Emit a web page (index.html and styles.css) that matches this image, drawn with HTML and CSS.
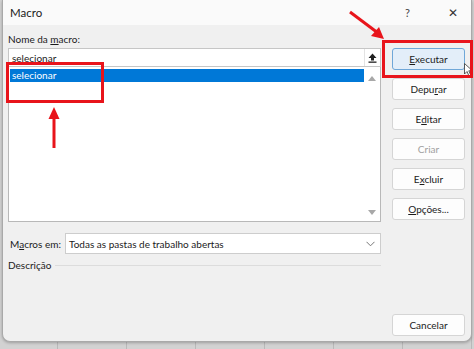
FILE: index.html
```html
<!DOCTYPE html>
<html lang="pt">
<head>
  <meta charset="UTF-8" />
  <title>Macro</title>
  <link rel="stylesheet" href="styles.css">
</head>
<body>

<div class="desktop">
  <div class="dialog">
    <!-- Barra de título -->
    <div class="titlebar">
      <span class="title">Macro</span>
      <span class="help">?</span>
      <span class="close">✕</span>
    </div>

    <div class="content">
      <!-- Coluna esquerda -->
      <div class="main">
        <div class="label">Nome da <u>m</u>acro:</div>
        <div class="name-box">
          <span class="name-text">selecionar</span>
          <span class="up-btn">
            <svg width="9" height="10" viewBox="0 0 9 10"><path d="M4.5 0.5 L8.5 5 L6 5 L6 7.5 L3 7.5 L3 5 L0.5 5 Z" fill="#222"/><rect x="0.5" y="8.5" width="8" height="1.3" fill="#222"/></svg>
          </span>
        </div>
        <div class="list">
          <div class="list-items">
            <div class="item selected">selecionar</div>
          </div>
          <div class="scroll">
            <svg width="8" height="5" viewBox="0 0 8 5"><path d="M0 5 L4 0 L8 5 Z" fill="#a8a8a8"/></svg>
            <svg width="8" height="5" viewBox="0 0 8 5"><path d="M0 0 L4 5 L8 0 Z" fill="#a8a8a8"/></svg>
          </div>
        </div>

        <div class="where">
          <span class="where-label">M<u>a</u>cros em:</span>
          <div class="select">
            <span>Todas as pastas de trabalho abertas</span>
            <svg width="9" height="6" viewBox="0 0 9 6"><path d="M0.5 0.8 L4.5 4.8 L8.5 0.8" fill="none" stroke="#777" stroke-width="1"/></svg>
          </div>
        </div>

        <div class="desc">
          <span>Descrição</span>
          <div class="desc-line"></div>
        </div>
      </div>

      <!-- Botões -->
      <div class="buttons">
        <div class="btn primary"><u>E</u>xecutar</div>
        <div class="btn">Depu<u>r</u>ar</div>
        <div class="btn">E<u>d</u>itar</div>
        <div class="btn disabled">Criar</div>
        <div class="btn">E<u>x</u>cluir</div>
        <div class="btn"><u>O</u>pções...</div>
        <div class="spacer"></div>
        <div class="btn">Cancelar</div>
      </div>
    </div>
  </div>

  <!-- Cursor do mouse -->
  <svg class="cursor" width="10" height="14" viewBox="0 0 10 14">
    <path d="M0.5 0.5 L0.5 11 L3 8.5 L5 13 L6.8 12.2 L4.8 7.8 L8.5 7.8 Z" fill="#fff" stroke="#333" stroke-width="0.8"/>
  </svg>

  <!-- Marcações em vermelho -->
  <div class="mark mark-btn"></div>
  <div class="mark mark-item"></div>
  <svg class="arrow arrow-top" width="40" height="32" viewBox="0 0 40 32">
    <line x1="2" y1="2" x2="30" y2="23" stroke="#e8141b" stroke-width="3"/>
    <path d="M36 29 L23 26 L31 17 Z" fill="#e8141b"/>
  </svg>
  <svg class="arrow arrow-up" width="14" height="42" viewBox="0 0 14 42">
    <line x1="7" y1="10" x2="7" y2="41" stroke="#e8141b" stroke-width="3"/>
    <path d="M7 0 L12.5 12 L1.5 12 Z" fill="#e8141b"/>
  </svg>
</div>

</body>
</html>
```

FILE: styles.css
```css
body {
  margin: 0;
  font-family: Lato, 'Noto Sans', sans-serif;
  font-size: 10px;
  color: #1b1b1b;
}

.desktop {
  position: relative;
  width: 474px;
  height: 349px;
  overflow: hidden;
  background: #d2d2d2;
  background-image: repeating-linear-gradient(to right, transparent 0, transparent 57px, #b9b9b9 57px, #b9b9b9 58px, transparent 58px, transparent 69px);
  background-position: 0 0;
}

.dialog {
  margin-left: 2px;
  width: 468px;
  height: 341px;
  background: #f0f0f0;
  border: 1px solid #a9a9a9;
  border-top: none;
  border-radius: 0 0 8px 8px;
  box-shadow: 0 1px 3px rgba(0, 0, 0, 0.25);
  display: flex;
  flex-direction: column;
}

.titlebar {
  height: 25px;
  background: #fafafa;
  display: flex;
  align-items: center;
  padding-left: 7px;
  font-size: 11.5px;
}

.title {
  flex: 1;
}

.help {
  width: 12px;
  margin-right: 31px;
  color: #444;
  font-size: 11px;
}

.close {
  width: 14px;
  margin-right: 9px;
  font-size: 12px;
  color: #333;
}

.content {
  flex: 1;
  display: flex;
  padding: 0 6px 5px 5px;
  gap: 11px;
}

.main {
  width: 373px;
  display: flex;
  flex-direction: column;
}

.label {
  margin-top: 8px;
  height: 15px;
  line-height: 12px;
}

.name-box {
  height: 17px;
  background: #fff;
  border: 1px solid #c6c6c6;
  display: flex;
  align-items: center;
}

.name-text {
  flex: 1;
  padding-left: 3px;
}

.up-btn {
  width: 15px;
  display: flex;
  justify-content: center;
  border-left: 1px solid #e3e3e3;
  height: 17px;
  align-items: center;
}

.list {
  height: 154px;
  background: #fff;
  border: 1px solid #b8b8b8;
  border-top: none;
  display: flex;
}

.list-items {
  flex: 1;
  padding-top: 2px;
}

.item {
  height: 13px;
  line-height: 13px;
  padding-left: 2px;
  margin-left: 1px;
}

.item.selected {
  background: #0078d7;
  color: #fff;
}

.scroll {
  width: 16px;
  display: flex;
  flex-direction: column;
  justify-content: space-between;
  align-items: center;
  padding: 9px 0 6px;
}

.where {
  margin-top: 11px;
  display: flex;
  align-items: center;
}

.where-label {
  width: 55px;
  padding-left: 2px;
}

.select {
  flex: 1;
  height: 19px;
  background: #fff;
  border: 1px solid #cdcdcd;
  display: flex;
  align-items: center;
  justify-content: space-between;
  padding: 0 5px 0 3px;
}

.desc {
  margin-top: 5px;
  display: flex;
  align-items: center;
  gap: 4px;
}

.desc-line {
  flex: 1;
  height: 1px;
  background: #dcdcdc;
}

.buttons {
  width: 73px;
  display: flex;
  flex-direction: column;
  gap: 8px;
  padding-top: 23px;
}

.btn {
  height: 20px;
  line-height: 20px;
  text-align: center;
  background: #fdfdfd;
  border: 1px solid #d5d5d5;
  border-radius: 3px;
}

.btn.primary {
  background: #e3eef9;
  border-color: #6fa7d8;
}

.btn.disabled {
  color: #a0a0a0;
}

.spacer {
  flex: 1;
}

.mark {
  position: absolute;
  border: 3px solid #e8141b;
}

.mark-btn {
  left: 382px;
  top: 40px;
  width: 85px;
  height: 32px;
}

.mark-item {
  left: 6px;
  top: 62px;
  width: 92px;
  height: 35px;
}

.arrow {
  position: absolute;
}

.arrow-top {
  left: 348px;
  top: 10px;
}

.arrow-up {
  left: 47px;
  top: 107px;
}

.cursor {
  position: absolute;
  left: 464px;
  top: 63px;
}
```
